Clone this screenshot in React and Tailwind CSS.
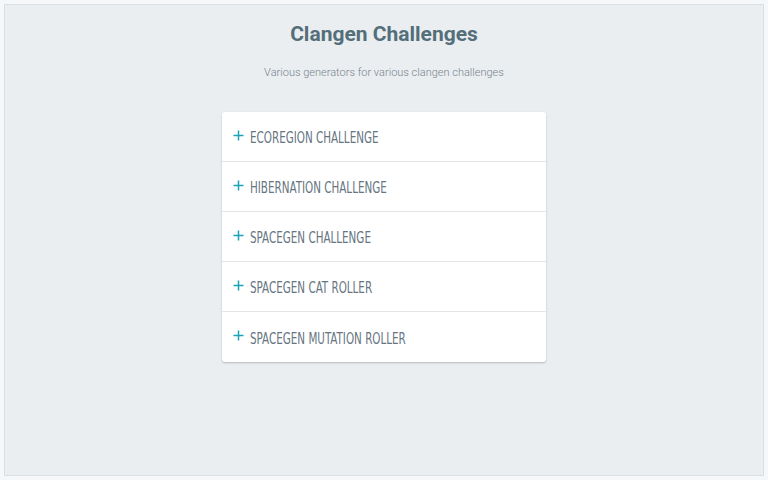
import React, { useState } from "react";

const challenges = [
  "Ecoregion Challenge",
  "Hibernation Challenge",
  "Spacegen Challenge",
  "Spacegen Cat Roller",
  "Spacegen Mutation Roller",
];

const PlusIcon = () => (
  <svg width="11" height="11" viewBox="0 0 11 11" className="-translate-y-[1px] shrink-0">
    <path d="M5.5 0.5v10M0.5 5.5h10" stroke="#1ba3b5" strokeWidth="1.5" />
  </svg>
);

const App = () => {
  const [open, setOpen] = useState(null);

  return (
    <div className="h-[480px] bg-[#f6f7f8] p-[4px] font-['Roboto',sans-serif]">
      <div className="h-full border border-[#dcdfe2] bg-[#eaeef1] pt-[14px]">
        <h1 className="text-center text-[21px] font-bold leading-[30px] text-[#546e7a]">
          Clangen Challenges
        </h1>
        <p className="mt-[16px] text-center text-[11px] font-light text-[#78838c]">
          Various generators for various clangen challenges
        </p>

        {/* Challenge list */}
        <div className="mx-auto mt-[30px] w-[324px] rounded-[3px] bg-white shadow-[0_1px_2px_rgba(0,0,0,0.22)]">
          {challenges.map((name, i) => (
            <button
              key={name}
              onClick={() => setOpen(open === i ? null : i)}
              className={`flex h-[50px] w-full items-center gap-[6px] px-[11px] text-left ${
                i < challenges.length - 1 ? "border-b border-[#e2e5e8]" : ""
              }`}
            >
              <PlusIcon />
              <span className="origin-left translate-y-[2px] scale-x-[0.72] whitespace-nowrap font-['DejaVu_Sans_Condensed',sans-serif] text-[16px] uppercase text-[#66757f]">
                {name}
              </span>
            </button>
          ))}
        </div>
      </div>
    </div>
  );
};

export default App;
